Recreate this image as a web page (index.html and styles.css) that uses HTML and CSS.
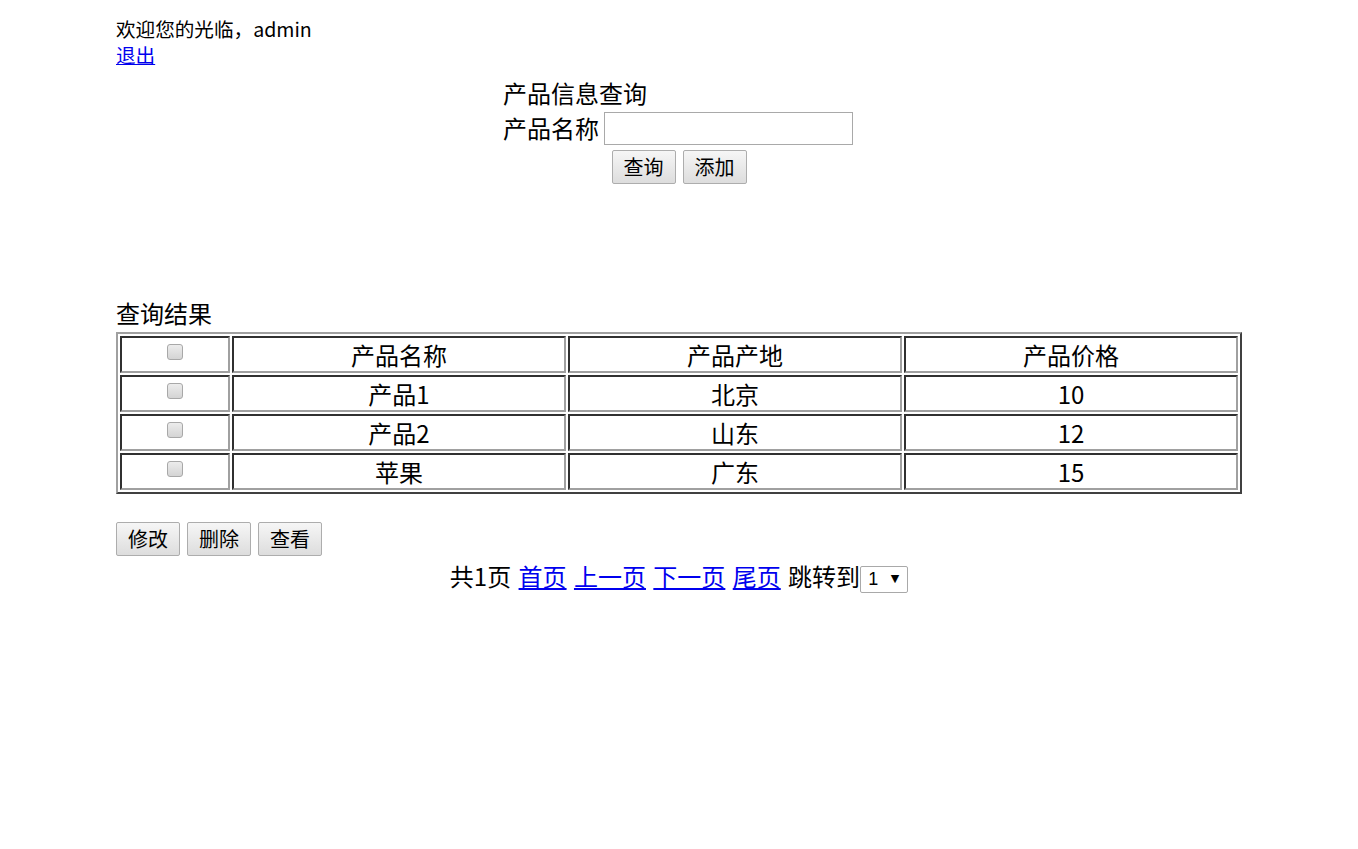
FILE: index.html
```html
<!DOCTYPE html>
<html lang="zh-CN">
<head>
<meta charset="utf-8">
<title>产品信息查询</title>
<link rel="stylesheet" href="styles.css">
</head>
<body>
<div class="page">
  <div class="welcome">欢迎您的光临，admin</div>
  <div class="logout"><a href="#">退出</a></div>

  <div class="search-wrap">
    <form class="search">
      <div class="search-title">产品信息查询</div>
      <div class="search-row">
        <label class="search-label">产品名称</label>
        <input class="search-input" type="text">
      </div>
      <div class="search-actions">
        <button type="button" class="btn">查询</button>
        <button type="button" class="btn">添加</button>
      </div>
    </form>
  </div>

  <div class="result-title">查询结果</div>
  <table class="result">
    <tr>
      <td class="col-check"><input type="checkbox" class="chk"></td>
      <td>产品名称</td>
      <td>产品产地</td>
      <td>产品价格</td>
    </tr>
    <tr>
      <td class="col-check"><input type="checkbox" class="chk"></td>
      <td>产品1</td>
      <td>北京</td>
      <td>10</td>
    </tr>
    <tr>
      <td class="col-check"><input type="checkbox" class="chk"></td>
      <td>产品2</td>
      <td>山东</td>
      <td>12</td>
    </tr>
    <tr>
      <td class="col-check"><input type="checkbox" class="chk"></td>
      <td>苹果</td>
      <td>广东</td>
      <td>15</td>
    </tr>
  </table>

  <div class="ops">
    <button type="button" class="btn">修改</button>
    <button type="button" class="btn">删除</button>
    <button type="button" class="btn">查看</button>
  </div>

  <div class="pager">
    共1页 <a href="#">首页</a> <a href="#">上一页</a> <a href="#">下一页</a> <a href="#">尾页</a> 跳转到<span class="jump-wrap"><select class="jump"><option>1</option></select></span>
  </div>
</div>
</body>
</html>
```

FILE: styles.css
```css
html, body {
  margin: 0;
  padding: 0;
  background: #ffffff;
}

body {
  font-family: "Noto Sans CJK SC", "Noto Sans", sans-serif;
  color: #000;
}

.page {
  width: 1126px;
  margin: 0 auto;
  padding-top: 17px;
}

.welcome {
  font-size: 19.6px;
  line-height: 24px;
  height: 26px;
}

.logout {
  font-size: 19.6px;
  line-height: 24px;
  height: 26px;
}

a {
  color: #0000ee;
  text-decoration: underline;
}

.search-wrap {
  display: flex;
  justify-content: center;
  margin-top: 8px;
}

.search {
  width: 352px;
  margin: 0;
}

.search-title {
  font-size: 24px;
  line-height: 32px;
}

.search-row {
  display: flex;
  align-items: center;
  height: 38px;
  gap: 5px;
}

.search-label {
  font-size: 24px;
  line-height: 32px;
}

.search-input {
  width: 249px;
  height: 33px;
  box-sizing: border-box;
  border: 1px solid #a9a9a9;
  padding: 2px 4px;
  margin: 0;
  font-size: 19px;
}

.search-actions {
  display: flex;
  justify-content: center;
  gap: 7px;
  margin-top: 3px;
}

.btn {
  font-family: "Noto Sans CJK SC", sans-serif;
  font-size: 20px;
  line-height: 26px;
  height: 34px;
  width: 64px;
  padding: 0;
  margin: 0;
  color: #000;
  border: 1px solid #adadad;
  border-radius: 2px;
  background: linear-gradient(#f6f6f6, #dddddd);
}

.result-title {
  margin-top: 113px;
  font-size: 24px;
  line-height: 32px;
}

.result {
  width: 100%;
  margin-top: 3px;
  border-collapse: separate;
  border-spacing: 2px;
  border-style: solid;
  border-width: 2px;
  border-color: #a0a0a0 #404040 #404040 #a0a0a0;
}

.result td {
  height: 33px;
  padding: 0;
  text-align: center;
  font-size: 24px;
  line-height: 33px;
  border-style: solid;
  border-width: 2px;
  border-color: #303030 #a0a0a0 #a0a0a0 #303030;
}

.result td.col-check {
  width: 106px;
  vertical-align: top;
}

.chk {
  appearance: none;
  -webkit-appearance: none;
  display: inline-block;
  box-sizing: border-box;
  width: 16px;
  height: 16px;
  margin: 6px 0 0 0;
  border: 1px solid #a8a8a8;
  border-radius: 3px;
  background: linear-gradient(#ececec, #d4d4d4);
  vertical-align: top;
}

.ops {
  display: flex;
  gap: 7px;
  margin-top: 28px;
}

.pager {
  text-align: center;
  font-size: 24px;
  line-height: 32px;
  margin-top: 4px;
  word-spacing: 2px;
}

.jump-wrap {
  position: relative;
  display: inline-block;
  vertical-align: middle;
}

.jump-wrap::after {
  content: "▼";
  position: absolute;
  right: 9px;
  top: 6px;
  font-family: "DejaVu Sans", sans-serif;
  font-size: 11px;
  line-height: 14px;
  color: #000;
  pointer-events: none;
}

.jump {
  appearance: none;
  -webkit-appearance: none;
  display: block;
  font-family: "Liberation Sans", sans-serif;
  font-size: 18px;
  line-height: 20px;
  height: 27px;
  width: 48px;
  padding: 0 0 0 7px;
  margin: 0;
  color: #000;
  border: 1px solid #a9a9a9;
  border-radius: 2px;
  background: #fff;
}
```
